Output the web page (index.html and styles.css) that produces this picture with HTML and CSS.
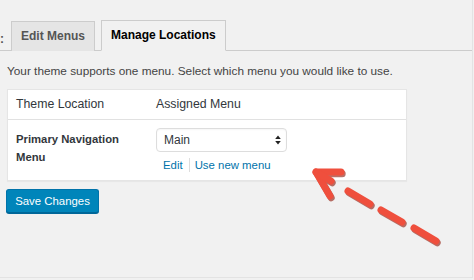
FILE: index.html
```html
<!doctype html>
<html>
<head>
    <meta charset="utf-8">
    <title>Manage Locations</title>
    <link rel="stylesheet" href="styles.css">
</head>
<body>
<div class="frame">
    <div class="tabs">
        <span class="cut">:</span>
        <a class="tab">Edit Menus</a>
        <a class="tab tab-active">Manage Locations</a>
    </div>

    <p class="intro">Your theme supports one menu. Select which menu you would like to use.</p>

    <div class="locations">
        <div class="row row-head">
            <div class="cell">Theme Location</div>
            <div class="cell">Assigned Menu</div>
        </div>
        <div class="row row-body">
            <div class="cell label">Primary Navigation<br>Menu</div>
            <div class="cell">
                <div class="select">
                    <span>Main</span>
                    <svg class="updown" width="6" height="10" viewBox="0 0 6 10">
                        <path d="M3 0.5 L5.8 4 L0.2 4 Z M3 9.5 L5.8 6 L0.2 6 Z" fill="#222"/>
                    </svg>
                </div>
                <div class="links">
                    <a>Edit</a>
                    <span class="sep"></span>
                    <a>Use new menu</a>
                </div>
            </div>
        </div>
    </div>

    <a class="btn">Save Changes</a>

    <svg class="arrow" width="474" height="280" viewBox="0 0 474 280">
        <g transform="translate(1.2 1.8)" stroke="#9e3528" stroke-width="7" stroke-linecap="round" stroke-linejoin="round" fill="none" opacity="0.7">
            <polyline points="341,172 316,172 330,196"/>
            <line x1="316" y1="172" x2="331" y2="181"/>
            <line x1="348" y1="191" x2="370" y2="204"/>
            <line x1="381" y1="210" x2="402" y2="222"/>
            <line x1="414" y1="228" x2="436" y2="241"/>
        </g>
        <g stroke="#ef4f3d" stroke-width="7" stroke-linecap="round" stroke-linejoin="round" fill="none">
            <polyline points="341,172 316,172 330,196"/>
            <line x1="316" y1="172" x2="331" y2="181"/>
            <line x1="348" y1="191" x2="370" y2="204"/>
            <line x1="381" y1="210" x2="402" y2="222"/>
            <line x1="414" y1="228" x2="436" y2="241"/>
        </g>
    </svg>
</div>
</body>
</html>
```

FILE: styles.css
```css
*{
    margin:0;
    padding:0;
    box-sizing:border-box;
}
body{
    background:#f1f1f1;
    font-family:"Liberation Sans", Arial, sans-serif;
    color:#444;
}

.frame{
    position:relative;
    width:473px;
    height:278px;
    border-right:1px solid #e3e3e3;
    border-bottom:1px solid #e3e3e3;
    overflow:hidden;
}

/* tabs */
.tabs{
    display:flex;
    align-items:flex-end;
    height:51px;
    padding-top:20px;
    border-bottom:1px solid #ccc;
}
.cut{
    margin-right:7px;
    font-size:12px;
    font-weight:bold;
    line-height:30px;
    color:#555;
    align-self:flex-start;
    padding-top:4px;
}
.tab{
    display:block;
    height:30px;
    padding:0 9px;
    margin-right:6px;
    margin-bottom:-1px;
    line-height:29px;
    font-size:12px;
    font-weight:bold;
    color:#555;
    background:#e5e5e5;
    border:1px solid #ccc;
    border-bottom:none;
}
.tab-active{
    height:31px;
    color:#000;
    background:#f1f1f1;
    border-bottom:1px solid #f1f1f1;
}

.intro{
    padding:12px 0 0 7px;
    font-size:11.8px;
    line-height:16px;
    color:#444;
}

/* locations table */
.locations{
    width:400px;
    margin:10px 0 0 7px;
    background:#fff;
    border:1px solid #e5e5e5;
    box-shadow:0 1px 1px rgba(0,0,0,.04);
}
.row{
    display:grid;
    grid-template-columns:148px 1fr;
}
.row-head{
    height:30px;
    line-height:29px;
    border-bottom:1px solid #e1e1e1;
    font-size:12.3px;
    color:#32373c;
}
.row-head .cell:first-child{
    padding-left:8px;
}
.row-body{
    height:60px;
}
.row-body .cell{
    padding:8px 0 0 0;
}
.row-body .label{
    padding:10px 0 0 8px;
    font-size:11.3px;
    font-weight:bold;
    line-height:18px;
    color:#32373c;
}

.select{
    display:flex;
    align-items:center;
    justify-content:space-between;
    width:131px;
    height:24px;
    padding:0 5px 0 7px;
    background:#fff;
    border:1px solid #ddd;
    border-radius:4px;
    box-shadow:inset 0 1px 2px rgba(0,0,0,.04);
    font-size:12px;
    color:#32373c;
}

.links{
    display:flex;
    align-items:center;
    height:16px;
    margin-top:5px;
    padding-left:7px;
    font-size:11.4px;
    color:#0073aa;
}
.links .sep{
    width:1px;
    height:14px;
    margin:0 5px 0 6px;
    background:#ddd;
}

.btn{
    display:block;
    width:93px;
    height:24px;
    margin:8px 0 0 6px;
    line-height:22px;
    text-align:center;
    font-size:11.4px;
    color:#fff;
    background:#0085ba;
    border:1px solid #0073aa;
    border-bottom-color:#006799;
    border-radius:3px;
    box-shadow:0 1px 0 #006799;
}

.arrow{
    position:absolute;
    left:0;
    top:0;
    pointer-events:none;
}
```
